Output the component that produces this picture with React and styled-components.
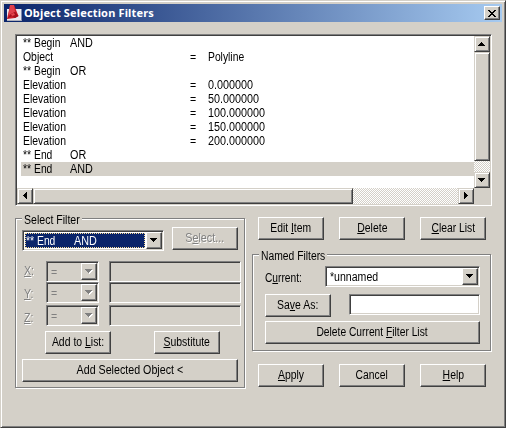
import React from "react";
import styled, { createGlobalStyle, css } from "styled-components";

const FACE = "#d4d0c8";
const SHADOW = "#808080";
const DARK = "#404040";

const Global = createGlobalStyle`
  * { box-sizing: border-box; }
  body {
    margin: 0;
    overflow: hidden;
    background: ${FACE};
    color: #000;
    font: 12px/14px "Liberation Sans", Arial, sans-serif;
  }
`;

const raised = css`
  background: ${FACE};
  border: 1px solid;
  border-color: #fff ${DARK} ${DARK} #fff;
  box-shadow: inset -1px -1px ${SHADOW};
`;

const sunken = css`
  border: 1px solid;
  border-color: ${SHADOW} #fff #fff ${SHADOW};
  box-shadow: inset 1px 1px ${DARK}, inset -1px -1px ${FACE};
`;

const Dialog = styled.main`
  width: 506px;
  height: 428px;
  padding: 2px 2px 0 2px;
  background: ${FACE};
  border: 1px solid;
  border-color: ${FACE} ${DARK} ${DARK} ${FACE};
  box-shadow: inset 1px 1px #fff, inset -1px -1px ${SHADOW};
`;

const TitleBar = styled.header`
  display: flex;
  align-items: center;
  height: 18px;
  margin: 1px 0 0 1px;
  width: 498px;
  padding: 0 2px 0 2px;
  background: linear-gradient(to right, #0a246a, #a6caf0);
`;

const Title = styled.h1`
  flex: 1;
  margin: 0 0 0 2px;
  color: #fff;
  font: bold 11px/16px "Noto Sans", "DejaVu Sans", sans-serif;
  letter-spacing: 0.15px;
  white-space: nowrap;
`;

const CloseButton = styled.button`
  ${raised}
  display: grid;
  place-items: center;
  width: 16px;
  height: 14px;
  padding: 0;
`;

const Text = styled.span`
  display: inline-block;
  white-space: pre;
  transform: scaleX(${(p) => p.$scale || 0.88});
  transform-origin: ${(p) => (p.$center ? "center" : "left")};
`;

const Key = styled.span`
  text-decoration: underline;
  text-underline-offset: 1px;
  text-decoration-thickness: 1px;
  text-decoration-skip-ink: none;
`;

const ListBox = styled.section`
  ${sunken}
  display: grid;
  grid-template: 152px 16px / 457px 16px;
  width: 477px;
  height: 172px;
  margin: 12px 0 0 12px;
  padding: 1px;
  background: #fff;
`;

const Rows = styled.div`
  overflow: hidden;
  padding-left: 4px;
`;

const Row = styled.div`
  display: grid;
  grid-template-columns: ${(p) => (p.$marker ? "11px 36px 1fr" : "167px 18px 1fr")};
  height: 14px;
  padding-left: 2px;
  line-height: 15px;
  background: ${(p) => (p.$selected ? FACE : "transparent")};
`;

const checker = css`
  background: repeating-conic-gradient(#fff 0 25%, ${FACE} 0 50%) 0 0 / 2px 2px;
`;

const VScroll = styled.div`
  ${checker}
  display: grid;
  grid-template-rows: 16px 109px 11px 16px;
`;

const HScroll = styled.div`
  ${checker}
  display: grid;
  grid-template-columns: 16px 320px 105px 16px;
`;

const ScrollPart = styled.div`
  border: 1px solid;
  border-color: ${FACE} ${DARK} ${DARK} ${FACE};
  box-shadow: inset 1px 1px #fff, inset -1px -1px ${SHADOW};
  background: ${FACE};
  display: grid;
  place-items: center;
`;

const Corner = styled.div`
  background: ${FACE};
`;

const Lower = styled.div`
  display: grid;
  grid-template-columns: 230px 239px;
  column-gap: 7px;
  margin: 11px 0 0 12px;
`;

const Group = styled.section`
  position: relative;
  width: 100%;
  height: ${(p) => p.$height}px;
  border: 1px solid ${SHADOW};
  box-shadow: inset 1px 1px #fff, 1px 1px #fff;
`;

const Legend = styled.h2`
  position: absolute;
  top: -6px;
  left: 6px;
  width: ${(p) => p.$width}px;
  height: 14px;
  margin: 0;
  padding-left: 2px;
  background: ${FACE};
  font: inherit;
  white-space: nowrap;
`;

const Flow = styled.div`
  display: flex;
  align-items: flex-start;
  gap: ${(p) => p.$gap || 0}px;
  margin: ${(p) => p.$margin || "0"};
`;

const Button = styled.button`
  ${raised}
  display: flex;
  align-items: center;
  justify-content: center;
  width: ${(p) => p.$width || 66}px;
  height: 23px;
  padding: 0 0 1px;
  font: inherit;
  color: #000;
  &:disabled {
    color: ${SHADOW};
    text-shadow: 1px 1px #fff;
  }
`;

const Combo = styled.div`
  ${sunken}
  display: flex;
  width: ${(p) => p.$width}px;
  height: 21px;
  padding: 1px;
  background: ${(p) => (p.$disabled ? FACE : "#fff")};
  color: ${(p) => (p.$disabled ? SHADOW : "#000")};
`;

const ComboValue = styled.div`
  flex: 1;
  display: flex;
  align-items: center;
  padding-left: 3px;
`;

const ActiveValue = styled.div`
  flex: 1;
  display: grid;
  grid-template-columns: 11px 37px 1fr;
  align-items: center;
  margin: 1px;
  background: #0a246a;
  color: #fff;
  outline: 1px dotted #f5db95;
  outline-offset: -1px;
  padding-left: 1px;
`;

const DropButton = styled.div`
  ${raised}
  display: grid;
  place-items: center;
  width: 16px;
  height: 17px;
`;

const Field = styled.div`
  ${sunken}
  width: ${(p) => p.$width}px;
  height: 21px;
  background: ${(p) => (p.$disabled ? FACE : "#fff")};
`;

const AxisRow = styled.div`
  display: grid;
  grid-template-columns: 22px 53px 142px;
  height: 21px;
  margin: ${(p) => p.$top}px 0 0 8px;
`;

const AxisLabel = styled.div`
  padding-top: ${(p) => p.$drop}px;
  color: ${SHADOW};
  font-size: 13px;
  text-shadow: 1px 1px #fff;
`;

const AxisField = styled(Field)`
  margin-left: 10px;
`;

const FieldLabel = styled.div`
  width: 60px;
  padding-top: 5px;
`;

const arrows = {
  up: "M3 0h1v1h1v1h1v1h1v1H0V3h1V2h1V1h1z",
  down: "M0 0h7v1H6v1H5v1H4v1H3V3H2V2H1V1H0z",
  left: "M4 0v7H3V6H2V5H1V4H0V3h1V2h1V1h1V0z",
  right: "M0 0v7h1V6h1V5h1V4h1V3H3V2H2V1H1V0z",
};

function Arrow({ dir, disabled }) {
  const tall = dir === "left" || dir === "right";
  return (
    <svg width={tall ? 5 : 8} height={tall ? 8 : 5} shapeRendering="crispEdges">
      {disabled && <path d={arrows[dir]} fill="#fff" transform="translate(1 1)" />}
      <path d={arrows[dir]} fill={disabled ? SHADOW : "#000"} />
    </svg>
  );
}

function AppIcon() {
  return (
    <svg width="16" height="16" viewBox="0 0 16 16">
      <path d="M1 4h14.500v12H1z" fill="#eceaf0" />
      <path d="M1 15h14.500v1H1z" fill="#aeb0bc" />
      <path d="M4 0L8 0L12.500 11L9 13L1 14L3 5z" fill="#c91e2b" />
      <path d="M4 0L8 0L9 7L5 9L2.500 10z" fill="#e0404c" />
      <path d="M5 9L9 7L12.500 11L9 13L6 11L1 14z" fill="#a5101d" />
      <path d="M5 9L8 8L9 10L6 11z" fill="#e64751" />
    </svg>
  );
}

const rows = [
  ["begin", "Begin", "AND"],
  ["rule", "Object", "Polyline"],
  ["begin", "Begin", "OR"],
  ["rule", "Elevation", "0.000000"],
  ["rule", "Elevation", "50.000000"],
  ["rule", "Elevation", "100.000000"],
  ["rule", "Elevation", "150.000000"],
  ["rule", "Elevation", "200.000000"],
  ["end", "End", "OR"],
  ["end", "End", "AND"],
];

const axes = [
  { name: "X", top: 10, drop: 3 },
  { name: "Y", top: 0, drop: 5 },
  { name: "Z", top: 2, drop: 6 },
];

function Caption({ children, scale }) {
  return <Text $center $scale={scale}>{children}</Text>;
}

function FilterRow({ row: [kind, a, b], selected }) {
  if (kind === "rule")
    return (
      <Row>
        <Text $scale={0.87}>{a}</Text>
        <Text>=</Text>
        <Text $scale={b === "Polyline" ? 0.86 : 0.9}>{b}</Text>
      </Row>
    );
  return (
    <Row $marker $selected={selected}>
      <Text>**</Text>
      <Text $scale={0.86}>{a}</Text>
      <Text $scale={0.9}>{b}</Text>
    </Row>
  );
}

export default function App() {
  return (
    <Dialog>
      <Global />
      <TitleBar>
        <AppIcon />
        <Title>Object Selection Filters</Title>
        <CloseButton aria-label="Close">
          <svg width="8" height="7" shapeRendering="crispEdges">
            <path d="M0 0h2v1h1v1h2V1h1V0h2v1H7v1H6v1H5v1h1v1h1v1h1v1H6V6H5V5H3v1H2v1H0V6h1V5h1V4h1V3H2V2H1V1H0z" />
          </svg>
        </CloseButton>
      </TitleBar>

      <ListBox>
        <Rows>
          {rows.map((row, i) => (
            <FilterRow key={i} row={row} selected={i === rows.length - 1} />
          ))}
        </Rows>
        <VScroll>
          <ScrollPart><Arrow dir="up" /></ScrollPart>
          <ScrollPart />
          <span />
          <ScrollPart><Arrow dir="down" /></ScrollPart>
        </VScroll>
        <HScroll>
          <ScrollPart><Arrow dir="left" /></ScrollPart>
          <ScrollPart />
          <span />
          <ScrollPart><Arrow dir="right" /></ScrollPart>
        </HScroll>
        <Corner />
      </ListBox>

      <Lower>
        <Flow $margin="1px 0 0">
          <Group $height={170}>
            <Legend $width={60}><Text $scale={0.88}>Select Filter</Text></Legend>
            <Flow $gap={8} $margin="8px 0 0 6px">
              <Flow $margin="3px 0 0">
                <Combo $width={142}>
                  <ActiveValue>
                    <Text>**</Text>
                    <Text $scale={0.86}>End</Text>
                    <Text $scale={0.9}>AND</Text>
                  </ActiveValue>
                  <DropButton><Arrow dir="down" /></DropButton>
                </Combo>
              </Flow>
              <Button disabled><Caption scale={0.9}>S<Key>e</Key>lect...</Caption></Button>
            </Flow>
            {axes.map(({ name, top, drop }) => (
              <AxisRow key={name} $top={top}>
                <AxisLabel $drop={drop}><Text $scale={0.82}><Key>{name}</Key>:</Text></AxisLabel>
                <Combo $width={53} $disabled>
                  <ComboValue><Text>=</Text></ComboValue>
                  <DropButton><Arrow dir="down" disabled /></DropButton>
                </Combo>
                <AxisField $width={132} $disabled />
              </AxisRow>
            ))}
            <Flow $gap={43} $margin="5px 0 0 29px">
              <Button><Caption scale={0.87}>Add to <Key>L</Key>ist:</Caption></Button>
              <Button><Caption scale={0.87}><Key>S</Key>ubstitute</Caption></Button>
            </Flow>
            <Flow $margin="5px 0 0 6px">
              <Button $width={216}><Caption scale={0.89}>Add Selected Object &lt;</Caption></Button>
            </Flow>
          </Group>
        </Flow>

        <div>
          <Flow $gap={15} $margin="0 0 0 6px">
            <Button><Caption scale={0.86}>Edit <Key>I</Key>tem</Caption></Button>
            <Button><Caption scale={0.87}><Key>D</Key>elete</Caption></Button>
            <Button><Caption scale={0.86}><Key>C</Key>lear List</Caption></Button>
          </Flow>
          <Flow $margin="14px 0 0">
            <Group $height={97}>
              <Legend $width={68}><Text $scale={0.86}>Named Filters</Text></Legend>
              <Flow $margin="11px 0 0 12px">
                <FieldLabel><Text $scale={0.85}>C<Key>u</Key>rrent:</Text></FieldLabel>
                <Combo $width={155}>
                  <ComboValue><Text>*unnamed</Text></ComboValue>
                  <DropButton><Arrow dir="down" /></DropButton>
                </Combo>
              </Flow>
              <Flow $gap={18} $margin="7px 0 0 12px">
                <Button><Caption scale={0.87}>Sa<Key>v</Key>e As:</Caption></Button>
                <Field $width={131} />
              </Flow>
              <Flow $margin="4px 0 0 12px">
                <Button $width={215}><Caption scale={0.855}>Delete Current <Key>F</Key>ilter List</Caption></Button>
              </Flow>
            </Group>
          </Flow>
          <Flow $gap={15} $margin="13px 0 0 6px">
            <Button><Caption scale={0.87}><Key>A</Key>pply</Caption></Button>
            <Button><Caption scale={0.86}>Cancel</Caption></Button>
            <Button><Caption scale={0.87}><Key>H</Key>elp</Caption></Button>
          </Flow>
        </div>
      </Lower>
    </Dialog>
  );
}
